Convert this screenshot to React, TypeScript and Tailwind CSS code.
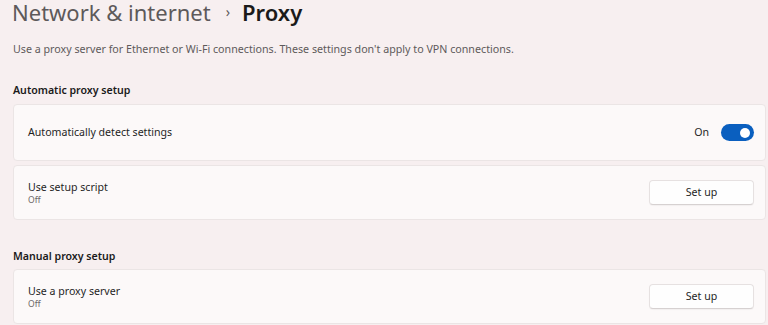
import React from 'react';

const font = { fontFamily: '"Noto Sans", "Open Sans", sans-serif' };

function Toggle() {
  return (
    <div className="flex items-center gap-[12px]">
      <span className="text-[10.6px] text-[#1f1f1f]">On</span>
      <div className="w-[33px] h-[17px] rounded-full bg-[#0a5fbf] flex items-center justify-end pr-[4px]">
        <div className="w-[10px] h-[10px] rounded-full bg-white" />
      </div>
    </div>
  );
}

function SetupButton() {
  return (
    <button className="w-[105px] h-[25px] rounded-[4px] bg-[#fefefe] border border-[#e6e1e1] border-b-[#d6d1d1] text-[10.6px] text-[#1f1f1f] shadow-[0_1px_1px_rgba(0,0,0,0.04)]">
      Set up
    </button>
  );
}

function Card({ children, className }: { children: React.ReactNode; className: string }) {
  return (
    <div className={`flex items-center justify-between pl-[14px] pr-[11px] rounded-[4px] bg-[#fcf9f9] border border-[#ebe5e5] ${className}`}>
      {children}
    </div>
  );
}

export default function App() {
  return (
    <div style={font} className="w-[768px] h-[325px] overflow-hidden bg-[#f7eff0] pl-[13px] pr-[2px]">
      <div className="flex items-center h-[24px] text-[22px] leading-[24px]">
        <span className="text-[#5d595a] -ml-[1px]">Network &amp; internet</span>
        <span className="text-[#5d595a] text-[14px] ml-[15px] mr-[12px]">›</span>
        <span className="font-semibold text-[#1b1a1a]">Proxy</span>
      </div>
      <p className="mt-[18px] text-[10.7px] leading-[14px] text-[#5e5a5b]">
        Use a proxy server for Ethernet or Wi-Fi connections. These settings don't apply to VPN connections.
      </p>
      <h2 className="mt-[27px] text-[10.6px] leading-[14px] font-semibold text-[#1b1a1a]">Automatic proxy setup</h2>
      <div className="mt-[7px] flex flex-col gap-[4px]">
        <Card className="h-[57px]">
          <span className="text-[10.6px] text-[#1f1f1f]">Automatically detect settings</span>
          <Toggle />
        </Card>
        <Card className="h-[55px]">
          <div className="flex flex-col">
            <span className="text-[10.6px] leading-[14px] text-[#1f1f1f]">Use setup script</span>
            <span className="text-[8.5px] leading-[11px] text-[#6a6566]">Off</span>
          </div>
          <SetupButton />
        </Card>
      </div>
      <h2 className="mt-[29px] text-[10.6px] leading-[14px] font-semibold text-[#1b1a1a]">Manual proxy setup</h2>
      <div className="mt-[6px]">
        <Card className="h-[55px]">
          <div className="flex flex-col">
            <span className="text-[10.6px] leading-[14px] text-[#1f1f1f]">Use a proxy server</span>
            <span className="text-[8.5px] leading-[11px] text-[#6a6566]">Off</span>
          </div>
          <SetupButton />
        </Card>
      </div>
    </div>
  );
}
